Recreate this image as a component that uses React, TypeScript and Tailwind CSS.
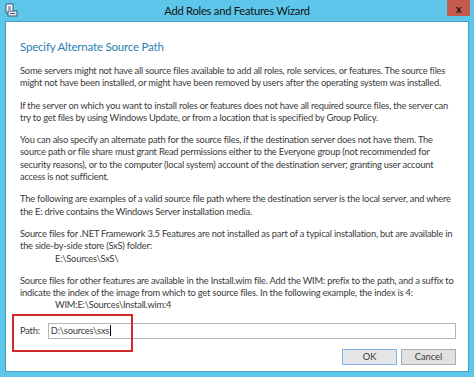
const paragraphs: { lines: string[]; indent?: string }[] = [
  {
    lines: [
      "Some servers might not have all source files available to add all roles, role services, or features. The source files",
      "might not have been installed, or might have been removed by users after the operating system was installed.",
    ],
  },
  {
    lines: [
      "If the server on which you want to install roles or features does not have all required source files, the server can",
      "try to get files by using Windows Update, or from a location that is specified by Group Policy.",
    ],
  },
  {
    lines: [
      "You can also specify an alternate path for the source files, if the destination server does not have them. The",
      "source path or file share must grant Read permissions either to the Everyone group (not recommended for",
      "security reasons), or to the computer (local system) account of the destination server; granting user account",
      "access is not sufficient.",
    ],
  },
  {
    lines: [
      "The following are examples of a valid source file path where the destination server is the local server, and where",
      "the E: drive contains the Windows Server installation media.",
    ],
  },
  {
    lines: [
      "Source files for .NET Framework 3.5 Features are not installed as part of a typical installation, but are available in",
      "the side-by-side store (SxS) folder:",
    ],
    indent: "E:\\Sources\\SxS\\",
  },
  {
    lines: [
      "Source files for other features are available in the Install.wim file. Add the WIM: prefix to the path, and a suffix to",
      "indicate the index of the image from which to get source files. In the following example, the index is 4:",
    ],
    indent: "WIM:E:\\Sources\\Install.wim:4",
  },
];

export default function App() {
  return (
    <div
      className="flex h-[377px] w-[474px] flex-col overflow-hidden bg-[#5ec6ea] text-[#3a3a3a]"
      style={{ fontFamily: 'Lato, "Noto Sans", sans-serif' }}
    >
      <div className="relative flex h-[21px] shrink-0 items-center justify-center">
        <svg className="absolute left-[5px] top-[3px]" width="13" height="14" viewBox="0 0 13 14">
          <rect x="1" y="1" width="7" height="9" fill="#ffffff" stroke="#3a5a80" strokeWidth="1" />
          <line x1="3" y1="4" x2="6" y2="4" stroke="#3a5a80" />
          <line x1="3" y1="6" x2="6" y2="6" stroke="#3a5a80" />
          <rect x="3" y="8" width="9" height="5" fill="#e8e8e8" stroke="#3a5a80" strokeWidth="1" />
          <rect x="5" y="10" width="5" height="1" fill="#3a5a80" />
        </svg>
        <span className="pt-[1px] text-[11.2px] tracking-[-0.25px] text-[#111111]">Add Roles and Features Wizard</span>
        <div className="absolute right-[4px] top-0 flex h-[16px] w-[23px] items-center justify-center bg-[#c75a4e]">
          <span className="text-[11px] font-bold leading-none text-[#1a1a1a]">x</span>
        </div>
      </div>
      <div className="mx-[5px] mb-[5px] flex flex-1 flex-col border border-[#4a9cc4] bg-white pl-[14px] pr-[12px] pt-[17px]">
        <h1 className="text-[11.5px] leading-[16px] tracking-[-0.2px] text-[#2e80b4]">Specify Alternate Source Path</h1>
        <div className="mt-[10px] flex flex-col gap-[10px] whitespace-nowrap text-[9.3px] leading-[12.3px] tracking-[-0.2px]">
          {paragraphs.map((p, i) => (
            <div key={i}>
              {p.lines.map((line, j) => (
                <div key={j}>{line}</div>
              ))}
              {p.indent ? <div className="pl-[35px]">{p.indent}</div> : null}
            </div>
          ))}
        </div>
        <div className="relative mt-[11px] flex h-[16px] items-center gap-[8px] text-[9.3px] tracking-[-0.2px]">
          <div className="absolute left-[-8px] top-[-9px] h-[38px] w-[121px] border-2 border-[#d42a2a]" />
          <span>Path:</span>
          <div className="flex h-[16px] flex-1 items-center border border-[#b5b5b5] px-[2px]">
            <span>D:\sources\sxs</span>
            <span className="ml-[1px] h-[11px] w-px bg-black" />
          </div>
        </div>
        <div className="mt-[10px] flex justify-end gap-[4px] text-[9.3px]">
          <div className="flex h-[16px] w-[55px] items-center justify-center border border-[#7eb4ea] bg-[#e5e5e5]">
            OK
          </div>
          <div className="flex h-[16px] w-[55px] items-center justify-center border border-[#adadad] bg-[#e1e1e1]">
            Cancel
          </div>
        </div>
      </div>
    </div>
  );
}
